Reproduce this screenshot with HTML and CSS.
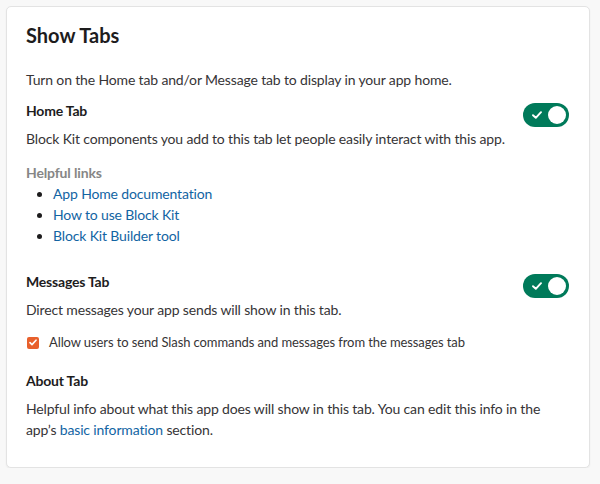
FILE: index.html
```
<!DOCTYPE html>
<html>
<head>
<meta charset="utf-8">
<link rel="stylesheet" href="styles.css">
</head>
<body>
<div class="card">
  <h1 class="title">Show Tabs</h1>
  <p class="intro">Turn on the Home tab and/or Message tab to display in your app home.</p>

  <div class="row home-row">
    <h2 class="heading">Home Tab</h2>
    <span class="toggle"><svg class="check" width="10" height="8" viewBox="0 0 10 8"><path d="M1 4.2 L3.8 6.8 L9 1.2" fill="none" stroke="#fff" stroke-width="1.9" stroke-linecap="round" stroke-linejoin="round"/></svg><span class="knob"></span></span>
  </div>
  <p class="desc">Block Kit components you add to this tab let people easily interact with this app.</p>

  <div class="helpful">Helpful links</div>
  <ul class="links">
    <li><a href="#">App Home documentation</a></li>
    <li><a href="#">How to use Block Kit</a></li>
    <li><a href="#">Block Kit Builder tool</a></li>
  </ul>

  <div class="row msg-row">
    <h2 class="heading">Messages Tab</h2>
    <span class="toggle"><svg class="check" width="10" height="8" viewBox="0 0 10 8"><path d="M1 4.2 L3.8 6.8 L9 1.2" fill="none" stroke="#fff" stroke-width="1.9" stroke-linecap="round" stroke-linejoin="round"/></svg><span class="knob"></span></span>
  </div>
  <p class="desc msg-desc">Direct messages your app sends will show in this tab.</p>

  <label class="checkrow">
    <span class="checkbox"><svg width="8" height="7" viewBox="0 0 8 7"><path d="M1 3.6 L3 5.6 L7 1.2" fill="none" stroke="#fff" stroke-width="1.6" stroke-linecap="round" stroke-linejoin="round"/></svg></span>
    <span class="checklabel">Allow users to send Slash commands and messages from the messages tab</span>
  </label>

  <h2 class="heading about">About Tab</h2>
  <p class="about-text">Helpful info about what this app does will show in this tab. You can edit this info in the app’s <a href="#">basic information</a> section.</p>
</div>
</body>
</html>
```
FILE: styles.css
```
html, body {
  margin: 0;
  padding: 0;
  background: #f8f8f8;
}
body {
  font-family: Lato, "Noto Sans", sans-serif;
  font-size: 14px;
  line-height: 21px;
  letter-spacing: -0.15px;
  color: #1d1c1d;
  padding: 6px 10px 0 6px;
}
.card {
  box-sizing: border-box;
  width: 584px;
  background: #fff;
  border: 1px solid #e3e3e3;
  border-radius: 5px;
  box-shadow: 0 1px 2px rgba(0, 0, 0, 0.06);
  padding: 14px 20px 27px 19px;
}
.title {
  margin: 0;
  font-size: 20px;
  line-height: 28px;
  font-weight: 700;
  letter-spacing: 0;
  color: #1d1c1d;
}
.intro {
  margin: 19.6px 0 0;
  color: #363436;
}
.row {
  display: flex;
  justify-content: space-between;
  align-items: flex-start;
}
.home-row {
  margin-top: 10.5px;
}
.msg-row {
  margin-top: 24.7px;
}
.heading {
  margin: 0;
  font-size: 14px;
  line-height: 21px;
  font-weight: 700;
  letter-spacing: -0.2px;
  color: #1d1c1d;
}
.toggle {
  margin-top: 2.9px;
  width: 46px;
  height: 24px;
  border-radius: 12px;
  background: #007a5a;
  display: flex;
  align-items: center;
  justify-content: space-between;
  padding: 0 3px 0 9px;
  box-sizing: border-box;
}
.check {
  display: block;
}
.knob {
  width: 18px;
  height: 18px;
  border-radius: 50%;
  background: #fff;
}
.desc {
  margin: 1.1px 0 0;
  color: #363436;
}
.helpful {
  margin-top: 13px;
  color: #868686;
  font-weight: 700;
}
.links {
  margin: 0;
  padding-left: 27px;
}
.links li {
  color: #1d1c1d;
}
a {
  color: #1264a3;
  text-decoration: none;
}
.checkrow {
  display: flex;
  align-items: center;
  margin-top: 12.4px;
  color: #363436;
}
.checklabel {
  font-size: 13px;
  line-height: 21px;
  letter-spacing: -0.1px;
}
.checkbox {
  width: 12px;
  height: 12px;
  border-radius: 2px;
  background: #e8602c;
  margin: 0 10px 0 1px;
  display: flex;
  align-items: center;
  justify-content: center;
}
.checkbox svg {
  display: block;
}
.about {
  margin-top: 16.6px;
}
.about-text {
  margin: 7px 0 0;
  color: #363436;
}
```
